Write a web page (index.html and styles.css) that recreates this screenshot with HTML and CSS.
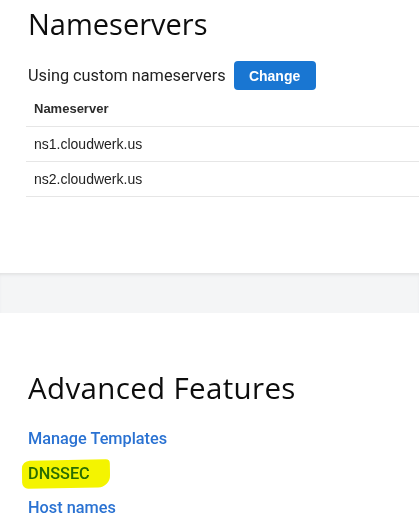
FILE: index.html
```html
<!DOCTYPE html>
<html>
<head>
<meta charset="utf-8">
<link rel="stylesheet" href="styles.css">
</head>
<body>
<section class="card top">
  <h1 class="title">Nameservers</h1>
  <div class="using">
    <span class="using-text">Using custom nameservers</span>
    <button class="btn">Change</button>
  </div>
  <div class="table">
    <div class="row head"><span>Nameserver</span></div>
    <div class="row"><span>ns1.cloudwerk.us</span></div>
    <div class="row"><span>ns2.cloudwerk.us</span></div>
  </div>
</section>
<div class="band"></div>
<section class="card bottom">
  <h2 class="title adv">Advanced Features</h2>
  <ul class="links">
    <li><a class="link">Manage Templates</a></li>
    <li><a class="link hl">DNSSEC</a></li>
    <li><a class="link">Host names</a></li>
  </ul>
</section>
</body>
</html>
```
FILE: styles.css
```css
html, body {
  margin: 0;
  padding: 0;
  background: #fff;
}
body {
  width: 419px;
  height: 529px;
  overflow: hidden;
  font-family: "Liberation Sans", Arial, sans-serif;
  color: #111;
}
.card {
  background: #fff;
  padding-left: 28px;
}
.top {
  height: 273px;
  box-sizing: border-box;
  padding-top: 5px;
}
.title {
  margin: 0;
  font-family: "Open Sans", "Noto Sans", sans-serif;
  font-weight: 500;
  font-size: 29px;
  line-height: 38px;
  color: #0d0d0d;
}
.using {
  display: flex;
  align-items: center;
  gap: 8px;
  margin-top: 18px;
}
.using-text {
  font-family: "Roboto", "Liberation Sans", sans-serif;
  font-size: 16.3px;
  color: #222;
}
.btn {
  width: 82px;
  height: 29px;
  border: 0;
  border-radius: 4px;
  background: #1976d2;
  color: #fff;
  font-family: "Liberation Sans", Arial, sans-serif;
  font-weight: 700;
  font-size: 14px;
  padding: 0;
}
.table {
  margin-left: -2px;
  margin-top: 1px;
}
.row {
  box-sizing: border-box;
  height: 35px;
  display: flex;
  align-items: center;
  padding-left: 8px;
  border-bottom: 1px solid #e6e6e6;
  font-size: 14px;
  color: #222;
}
.row.head {
  height: 36px;
  font-weight: 700;
  font-size: 13px;
  color: #2b2b2b;
}
.band {
  height: 40px;
  background: #f4f5f6;
  box-shadow: inset 0 3px 3px -1px #e2e3e4;
}
.bottom {
  padding-top: 56px;
}
.adv {
  font-size: 29.5px;
  letter-spacing: 0.35px;
}
.links {
  list-style: none;
  margin: 22px 0 0;
  padding: 0;
}
.links li {
  height: 34.5px;
}
.link {
  font-family: "Roboto", "Liberation Sans", sans-serif;
  font-weight: 500;
  font-size: 16.3px;
  color: #2a72d2;
  position: relative;
  display: inline-block;
}
.hl::before {
  content: "";
  position: absolute;
  left: -6px;
  right: -20px;
  top: -4px;
  bottom: -5px;
  background: #f4f400;
  border-radius: 8px 4px 12px 6px;
  transform: rotate(-1deg);
  mix-blend-mode: multiply;
}
```
